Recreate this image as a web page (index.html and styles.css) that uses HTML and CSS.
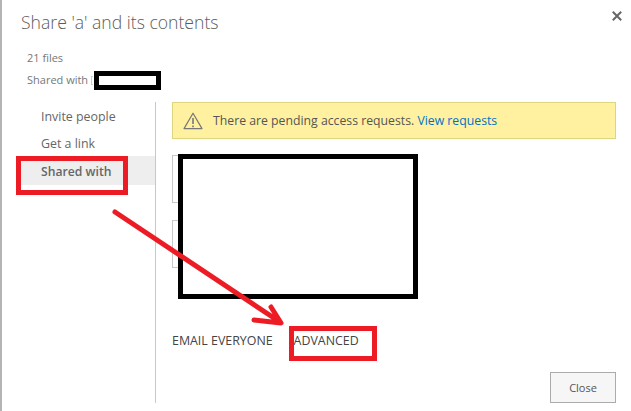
FILE: index.html
```html
<!DOCTYPE html>
<html lang="en">
<head>
<meta charset="utf-8">
<title>Share 'a' and its contents</title>
<link rel="stylesheet" href="styles.css">
</head>
<body>
<div class="dialog">
  <header class="head">
    <h1 class="title">Share 'a' and its contents</h1>
    <button class="x" aria-label="Close">
      <svg width="10" height="10" viewBox="0 0 10 10"><path d="M.8.8l8.4 8.4M9.2.8L.8 9.2" stroke="#666" stroke-width="2" fill="none"/></svg>
    </button>
  </header>
  <div class="meta">
    <div class="files">21 files</div>
    <div class="shared"><span class="shared-label">Shared with</span><i class="tick"></i><b class="redact-small"></b></div>
  </div>
  <div class="main">
    <nav class="nav">
      <a class="item">Invite people</a>
      <a class="item">Get a link</a>
      <a class="item on">Shared with</a>
    </nav>
    <section class="content">
      <div class="alert">
        <svg class="warn" width="20" height="18" viewBox="0 0 20 18"><path d="M10 1.2L1 16.6h18z" fill="none" stroke="#777" stroke-width="1.2" stroke-linejoin="round"/><path d="M10 6v6M10 13.6v1.6" stroke="#777" stroke-width="1.6" fill="none"/></svg>
        <span>There are pending access requests. <a class="link">View requests</a></span>
      </div>
      <div class="users">
        <div class="user"></div>
        <div class="user"></div>
      </div>
      <div class="actions">
        <a class="act">EMAIL EVERYONE</a>
        <a class="act">ADVANCED</a>
      </div>
      <div class="foot"><button class="close">Close</button></div>
    </section>
  </div>
</div>
<div class="redact-big"></div>
<div class="mark mark-nav"></div>
<div class="mark mark-adv"></div>
<svg class="arrow" width="631" height="411" viewBox="0 0 631 411">
  <path d="M115 212L280 322M271 307L281 323L254 320" fill="none" stroke="#ed1c24" stroke-width="5" stroke-linecap="round" stroke-linejoin="round"/>
</svg>
</body>
</html>
```
FILE: styles.css
```css
* { box-sizing: border-box; }
html, body { margin: 0; height: 100%; background: #fff; overflow: hidden; }
body { position: relative; font-family: "Open Sans", "Liberation Sans", sans-serif; }
.dialog { width: 631px; height: 411px; border-left: 2px solid #b4b4b4; display: flex; flex-direction: column; }
.head { display: flex; justify-content: space-between; align-items: flex-start; height: 50px; padding: 9px 9px 0 19px; }
.title { margin: 0; font-size: 17.6px; font-weight: 300; line-height: 27px; color: #5c5c5c; }
.x { margin: 2px 0 0; padding: 0; border: 0; background: none; width: 10px; height: 10px; display: block; line-height: 0; }
.meta { height: 52px; padding-left: 25px; font-size: 11px; color: #777; }
.files { line-height: 16px; }
.shared { display: flex; align-items: flex-start; height: 20px; margin-top: 5px; }
.shared-label { line-height: 18px; }
.tick { width: 2px; height: 9px; margin: 5px 0 0 3px; border: 1px solid #ccc; border-right: 0; }
.redact-small { width: 67px; height: 19px; margin-left: 1px; background: #fff; border: 5px solid #000; }
.main { flex: none; height: 301px; display: flex; }
.nav { width: 154px; border-right: 1px solid #c8c8c8; display: flex; flex-direction: column; padding-top: 1px; }
.item { display: block; padding-left: 39px; font-size: 12.4px; line-height: 27px; color: #666; }
.item.on { margin-top: -1px; line-height: 29px; padding-top: 1px; height: 29px; background: #eee; font-weight: 600; font-size: 12.2px; margin-left: 18px; padding-left: 21px; }
.content { flex: 1; padding: 0 15px 0 16px; display: flex; flex-direction: column; }
.alert { height: 37px; display: flex; align-items: center; gap: 10px; padding-left: 10px; background: #fff19f; border: 1px solid #dcd67f; font-size: 12.25px; color: #555; }
.warn { flex: none; }
.link { color: #0072c6; }
.users { margin-top: 16px; display: flex; flex-direction: column; gap: 17px; }
.user { height: 48px; width: 60px; border: 1px solid #c8c8c8; }
.actions { margin-top: 64px; display: flex; gap: 21px; font-size: 12.4px; line-height: 18px; color: #444; }
.foot { margin-top: auto; display: flex; justify-content: flex-end; padding-bottom: 0; }
.close { width: 66px; height: 31px; padding: 0; background: #f6f6f6; border: 1px solid #ababab; font: inherit; font-size: 11px; color: #555; }
.redact-big { position: absolute; left: 178px; top: 154px; width: 240px; height: 145px; background: #fff; border: 5px solid #000; }
.mark { position: absolute; border: 5px solid #ed1c24; }
.mark-nav { left: 16px; top: 156px; width: 112px; height: 39px; }
.mark-adv { left: 289px; top: 326px; width: 88px; height: 35px; }
.arrow { position: absolute; left: 0; top: 0; }
```
